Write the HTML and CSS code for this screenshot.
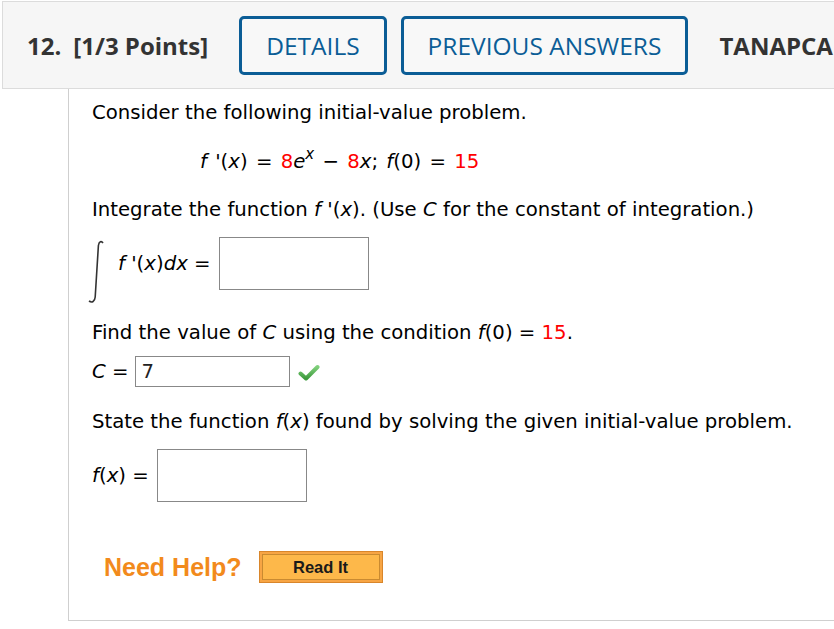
FILE: index.html
```html
<!DOCTYPE html>
<html>
<head>
<meta charset="utf-8">
<link rel="stylesheet" href="styles.css">
</head>
<body>
<div class="page">
  <div class="qhead">
    <span class="qnum">12.</span>
    <span class="qpts">[1/3 Points]</span>
    <button class="hbtn">DETAILS</button>
    <button class="hbtn">PREVIOUS ANSWERS</button>
    <span class="qsrc">TANAPCALC10</span>
  </div>
  <div class="panel">
    <p class="line first">Consider the following initial-value problem.</p>
    <p class="line eq"><i>f</i> '(<i>x</i>) = <span class="red">8</span><i>e</i><sup><i>x</i></sup> &minus; <span class="red">8</span><i>x</i>; <i>f</i>(0) = <span class="red">15</span></p>
    <p class="line gap">Integrate the function <i>f</i> '(<i>x</i>). (Use <i>C</i> for the constant of integration.)</p>
    <div class="row integ">
      <svg class="intsign" width="16" height="64" viewBox="0 0 16 64"><path d="M15 3 C13.5 0.8 11 1.2 10.4 5.5 L7.2 57 C6.8 61.5 4 63.2 1 61" fill="none" stroke="#333" stroke-width="1.6"/></svg>
      <span class="lbl"><i>f</i> '(<i>x</i>)<i>dx</i> =</span>
      <span class="box big"></span>
    </div>
    <p class="line find">Find the value of <i>C</i> using the condition <i>f</i>(0) = <span class="red">15</span>.</p>
    <div class="row crow">
      <span class="lbl"><i>C</i> =</span>
      <span class="box small">7</span>
      <svg class="check" width="22" height="18" viewBox="0 0 22 18">
        <defs><linearGradient id="g" x1="0" y1="0" x2="0" y2="1"><stop offset="0" stop-color="#7fcf7a"/><stop offset="1" stop-color="#3d9a3d"/></linearGradient></defs>
        <path d="M2.5 9.5 L8 14.5 L19.5 3" fill="none" stroke="url(#g)" stroke-width="4" stroke-linecap="round" stroke-linejoin="round"/>
      </svg>
    </div>
    <p class="line state">State the function <i>f</i>(<i>x</i>) found by solving the given initial-value problem.</p>
    <div class="row frow">
      <span class="lbl"><i>f</i>(<i>x</i>) =</span>
      <span class="box big"></span>
    </div>
    <div class="help">
      <span class="needhelp">Need Help?</span>
      <span class="readit"><span class="readit-in">Read It</span></span>
    </div>
  </div>
</div>
</body>
</html>
```
FILE: styles.css
```css
html, body {
  margin: 0;
  padding: 0;
  background: #fff;
  overflow: hidden;
}
.page {
  width: 900px;
  padding: 1px 0 0 2px;
}
.qhead {
  height: 86px;
  border: 1px solid #dcdcdc;
  background: #f6f6f6;
  display: flex;
  align-items: center;
  padding-left: 24px;
  font-family: "Open Sans", sans-serif;
  color: #333;
  white-space: nowrap;
}
.qnum, .qpts, .qsrc {
  font-weight: 700;
  font-size: 24px;
}
.qpts { margin-left: 12px; }
.hbtn {
  font-family: "Open Sans", sans-serif;
  font-size: 24.5px;
  color: #0b5d96;
  background: #f8f8f8;
  border: 3px solid #0b5d96;
  border-radius: 5px;
  height: 59px;
  padding: 0 24px;
  margin-left: 31px;
}
.hbtn + .hbtn { margin-left: 14px; }
.qsrc { margin-left: 31px; }
.panel {
  margin-left: 66px;
  border-left: 1px solid #cfcfcf;
  border-bottom: 1px solid #cfcfcf;
  padding: 12px 0 37px 23px;
  font-family: "DejaVu Sans", Verdana, sans-serif;
  font-size: 19.7px;
  color: #000;
}
.line {
  margin: 0;
  line-height: 24px;
  white-space: nowrap;
}
.eq { margin-top: 25px; padding-left: 108px; word-spacing: 2px; }
.gap { margin-top: 24px; }
.red { color: #f00; }
sup { font-size: 15px; vertical-align: 9px; line-height: 0; }
.row {
  display: flex;
  align-items: center;
  white-space: nowrap;
}
.integ { margin-top: 15px; height: 53px; }
.intsign { margin-left: -4px; margin-top: 16px; }
.integ .lbl { margin-left: 14px; }
.box {
  display: inline-block;
  border: 1px solid #888;
  background: #fff;
  box-sizing: border-box;
}
.big { width: 150px; height: 53px; }
.integ .box { margin-left: 8px; }
.find { margin-top: 31px; }
.crow { margin-top: 11px; height: 31px; }
.small {
  width: 155px;
  height: 31px;
  margin-left: 6px;
  padding-left: 6px;
  line-height: 29px;
  color: #222;
}
.check { margin-left: 8px; margin-top: 3px; }
.state { margin-top: 23px; }
.frow { margin-top: 15px; height: 53px; }
.frow .box { margin-left: 8px; }
.help {
  margin-top: 49px;
  margin-left: 12px;
  display: flex;
  align-items: center;
  height: 32px;
}
.needhelp {
  font-family: "Liberation Sans", Arial, sans-serif;
  font-weight: 700;
  font-size: 25px;
  color: #f28a1c;
}
.readit {
  margin-left: 17px;
  width: 124px;
  height: 32px;
  box-sizing: border-box;
  border: 1px solid #d9862b;
  background: #f7a544;
  padding: 2px;
  display: flex;
}
.readit-in {
  flex: 1;
  border: 1px solid #c98a30;
  background: #fdb84a;
  font-family: "Liberation Sans", Arial, sans-serif;
  font-weight: 700;
  font-size: 16.5px;
  color: #1a1a1a;
  display: flex;
  align-items: center;
  justify-content: center;
}
```
